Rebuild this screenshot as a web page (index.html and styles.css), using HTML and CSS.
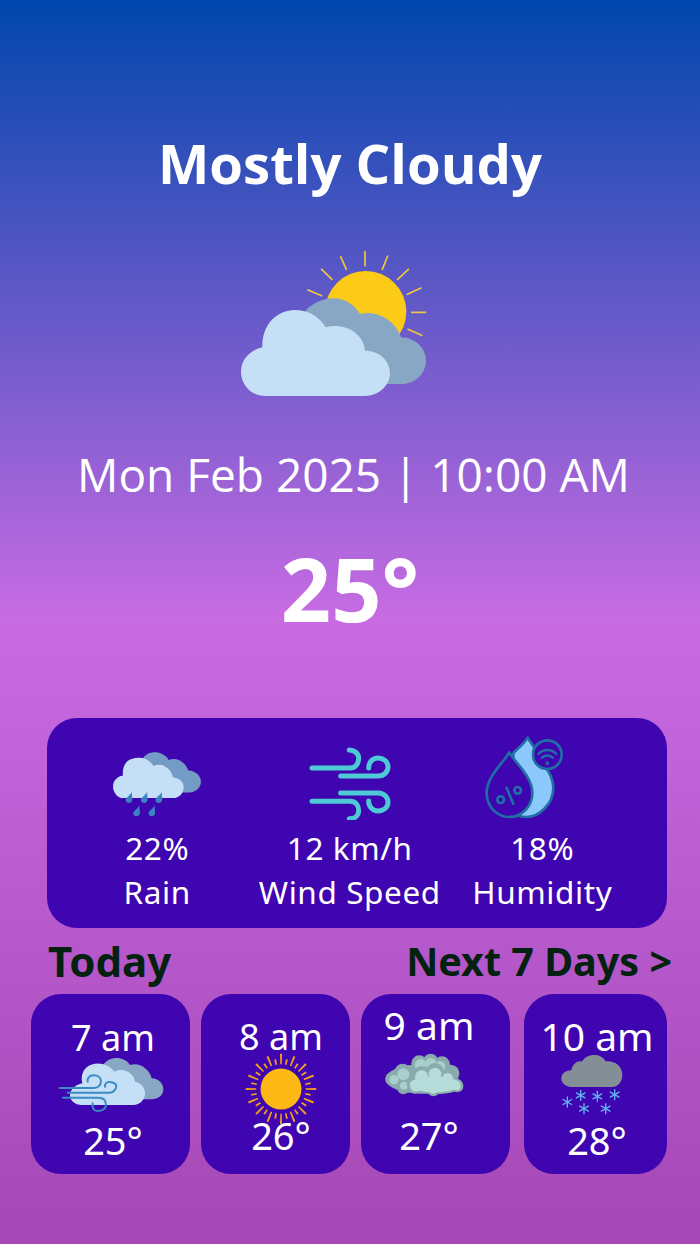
FILE: index.html
```html
<!DOCTYPE html>
<html lang="en">
<head>
  <meta charset="UTF-8" />
  <title>Weather</title>
  <link rel="stylesheet" href="styles.css">
</head>
<body>
  <svg class="defs" width="0" height="0">
    <defs>
      <path id="drop" d="M9 -17 C5 -7 -10 0 -10 8 C-10 14 -5 17 0 17 C6 17 10 12 10 6 C10 -2 8 -10 9 -17 Z" />
      <g id="flake" stroke="#62b5f0" stroke-width="4" stroke-linecap="round">
        <line x1="0" y1="-15" x2="0" y2="15" />
        <line x1="-13" y1="-7.500" x2="13" y2="7.500" />
        <line x1="-13" y1="7.500" x2="13" y2="-7.500" />
      </g>
    </defs>
  </svg>

  <main class="screen">
    <h1 class="title">Mostly Cloudy</h1>

    <svg class="hero" viewBox="0 0 690 510">
      <circle cx="437" cy="215" r="122" fill="#fccb17" />
      <g stroke="#f0c83c" stroke-width="5" stroke-linecap="round">
        <line x1="435" y1="35" x2="435" y2="77" />
        <line x1="362" y1="50" x2="379" y2="88" />
        <line x1="305" y1="88" x2="336" y2="118" />
        <line x1="264" y1="150" x2="305" y2="167" />
        <line x1="487" y1="88" x2="503" y2="48" />
        <line x1="533" y1="118" x2="565" y2="88" />
        <line x1="562" y1="163" x2="603" y2="144" />
        <line x1="575" y1="217" x2="617" y2="217" />
        <line x1="564" y1="268" x2="605" y2="286" />
      </g>
      <path fill="#88a7c4" d="M255 215 C275 190 310 175 340 175 C375 175 405 195 420 222 C470 210 525 240 543 292 C585 292 618 325 618 362 C618 400 585 432 545 432 H400 L300 300 Z" />
      <path fill="#c5dff6" d="M135 468 H435 C478 468 510 435 510 400 C510 362 478 332 435 332 C432 285 380 245 317 262 C295 225 260 210 225 210 C170 210 125 255 127 322 C90 330 63 358 63 395 C63 435 95 468 135 468 Z" />
    </svg>

    <p class="date">Mon Feb 2025 | 10:00 AM</p>
    <p class="temp">25°</p>

    <section class="stats">
      <div class="stat">
        <div class="stat-icon">
          <svg class="icon-rain" viewBox="215 105 275 205">
            <path fill="#739bc6" d="M310 130 C325 105 370 105 388 135 C415 125 440 145 447 167 C470 167 485 185 485 200 C485 218 470 233 450 233 H400 Z" />
            <path fill="#c5dff6" d="M250 250 H400 C420 250 433 235 433 218 C433 200 420 190 400 187 C398 165 370 140 342 153 C325 125 285 122 262 140 C250 152 248 170 250 182 C232 185 220 198 220 215 C220 235 235 250 250 250 Z" />
            <g fill="#3b82c0">
              <use href="#drop" x="268" y="248" />
              <use href="#drop" x="314" y="248" />
              <use href="#drop" x="358" y="248" />
              <use href="#drop" x="291" y="288" />
              <use href="#drop" x="337" y="288" />
            </g>
          </svg>
        </div>
        <div>22%</div>
        <div>Rain</div>
      </div>
      <div class="stat">
        <div class="stat-icon">
          <svg class="icon-wind" viewBox="0 15 300 225">
            <g fill="none" stroke="#4ecad6" stroke-width="15" stroke-linecap="round">
              <path d="M36 84 H150 C170 84 176 66 176 55 C176 40 162 30 148 30" />
              <path d="M122 108 H235 C252 108 264 95 264 80 C264 65 250 54 234 54 C218 54 206 66 206 84" />
              <path d="M122 159 H235 C252 159 264 172 264 187 C264 203 250 213 234 213 C218 213 206 200 206 183" />
              <path d="M36 184 H150 C170 184 176 200 176 212 C176 228 162 236 148 236" />
            </g>
          </svg>
        </div>
        <div>12 km/h</div>
        <div>Wind Speed</div>
      </div>
      <div class="stat">
        <div class="stat-icon">
          <svg class="icon-humidity" viewBox="0 0 270 270">
            <g stroke="#1f6fa5" stroke-width="8" stroke-linejoin="round">
              <path fill="#8cc8fb" d="M143 14 C155 35 170 50 180 75 C200 110 220 130 220 165 C220 215 175 252 140 252 C120 252 110 248 100 240 L100 60 C115 45 130 35 143 14 Z" />
              <path fill="#3f05b0" d="M88 58 C70 90 20 130 20 180 C20 225 55 252 88 252 C125 252 157 220 157 180 C157 130 105 90 88 58 Z" />
              <circle cx="202" cy="65" r="43" fill="#3f05b0" />
              <g fill="none">
                <circle cx="62" cy="200" r="10" />
                <circle cx="113" cy="172" r="10" />
                <path stroke-linecap="round" d="M80 165 L100 212" />
                <path stroke-linecap="round" d="M176 62 A36 36 0 0 1 228 62" />
                <path stroke-linecap="round" d="M186 74 A23 23 0 0 1 218 74" />
              </g>
              <circle cx="202" cy="91" r="2" fill="#1f6fa5" />
            </g>
          </svg>
        </div>
        <div>18%</div>
        <div>Humidity</div>
      </div>
    </section>

    <div class="section-head">
      <span class="today">Today</span>
      <span>Next 7 Days &gt;</span>
    </div>

    <section class="hours">
      <div class="hour hour-7">
        <div class="hour-label">7 am</div>
        <svg class="hour-icon" width="115" height="70" viewBox="0 0 345 210">
          <path fill="#88a7c4" d="M145 45 C160 20 205 15 225 45 C255 35 285 60 290 85 C310 85 325 100 325 118 C325 135 310 148 290 148 H200 Z" />
          <path fill="#c5dff6" d="M80 165 H235 C255 165 270 150 270 130 C270 110 255 98 240 95 C238 70 205 50 178 65 C160 40 120 32 95 52 C80 65 78 85 82 100 C60 105 45 120 45 135 C45 152 60 165 80 165 Z" />
          <g fill="none" stroke="#3b8ac4" stroke-width="6" stroke-linecap="round">
            <path d="M14 114 H118 C132 114 138 102 138 93 C138 82 128 76 115 76 C103 76 96 85 98 95" />
            <path d="M38 128 H165 C178 128 184 115 184 108 C184 100 172 96 162 96 C155 96 148 102 150 110" />
            <path d="M24 143 H130 C148 143 153 155 153 165 C153 177 140 183 128 183 C116 183 110 172 113 160" />
          </g>
        </svg>
        <div class="hour-temp">25°</div>
      </div>
      <div class="hour hour-8">
        <div class="hour-label">8 am</div>
        <svg class="hour-icon" width="72" height="72" viewBox="-36 -36 72 72">
          <g fill="none" stroke="#f5a01e">
            <circle r="30" stroke-width="10.500" pathLength="32" stroke-dasharray="0.300 1.700" stroke-dashoffset="0.150" />
            <circle r="27.500" stroke-width="5.500" pathLength="32" stroke-dasharray="0.320 1.680" stroke-dashoffset="-0.840" />
          </g>
          <circle r="20.500" fill="#fdb813" />
        </svg>
        <div class="hour-temp">26°</div>
      </div>
      <div class="hour hour-9">
        <div class="hour-label">9 am</div>
        <svg class="hour-icon" width="90" height="60" viewBox="0 0 270 180">
          <g fill="#8aabab">
            <ellipse cx="122" cy="102" rx="106" ry="44" />
            <circle cx="118" cy="55" r="24" />
            <circle cx="152" cy="48" r="22" />
            <circle cx="186" cy="58" r="24" />
            <circle cx="212" cy="85" r="26" />
            <circle cx="68" cy="80" r="24" />
            <circle cx="36" cy="102" r="20" />
            <circle cx="70" cy="130" r="18" />
          </g>
          <g fill="#a9cfcc">
            <circle cx="122" cy="60" r="18" />
            <circle cx="152" cy="55" r="16" />
            <circle cx="180" cy="64" r="16" />
            <circle cx="70" cy="88" r="18" />
            <circle cx="42" cy="104" r="14" />
            <circle cx="72" cy="122" r="12" />
          </g>
          <g fill="#8aabab">
            <ellipse cx="165" cy="118" rx="84" ry="30" />
            <circle cx="125" cy="90" r="27" />
            <circle cx="165" cy="80" r="26" />
            <circle cx="205" cy="95" r="22" />
            <circle cx="105" cy="122" r="24" />
            <circle cx="232" cy="124" r="18" />
            <circle cx="160" cy="136" r="18" />
          </g>
          <g fill="#b5dcd9">
            <ellipse cx="165" cy="118" rx="76" ry="24" />
            <circle cx="125" cy="96" r="20" />
            <circle cx="165" cy="87" r="19" />
            <circle cx="203" cy="100" r="16" />
            <circle cx="108" cy="122" r="18" />
            <circle cx="230" cy="124" r="12" />
            <circle cx="160" cy="132" r="14" />
          </g>
        </svg>
        <div class="hour-temp">27°</div>
      </div>
      <div class="hour hour-10">
        <div class="hour-label">10 am</div>
        <svg class="hour-icon" width="65" height="65" viewBox="625 200 195 195">
          <path fill="#838e96" d="M665 305 C645 305 632 292 632 280 C632 265 645 255 662 255 C665 235 680 225 695 228 C705 205 750 200 765 228 C790 225 815 240 815 268 C815 290 800 305 785 305 Z" />
          <use href="#flake" x="650" y="350" />
          <use href="#flake" x="690" y="330" />
          <use href="#flake" x="740" y="333" />
          <use href="#flake" x="792" y="328" />
          <use href="#flake" x="700" y="370" />
          <use href="#flake" x="765" y="370" />
        </svg>
        <div class="hour-temp">28°</div>
      </div>
    </section>
  </main>
</body>
</html>
```

FILE: styles.css
```css
html, body {
  margin: 0;
  padding: 0;
}
body {
  font-family: "Open Sans", sans-serif;
  color: #fff;
}
.defs {
  position: absolute;
}
.screen {
  height: 1244px;
  box-sizing: border-box;
  padding-top: 128px;
  overflow: hidden;
  background: linear-gradient(#0047ad 0, #c86be3 620px, #a547b5 1244px);
}
.title {
  margin: 0;
  font-size: 54.500px;
  line-height: 70px;
  font-weight: 700;
  text-align: center;
}
.hero {
  display: block;
  width: 230px;
  height: 170px;
  margin: 42px 0 0 220px;
}
.date {
  margin: 34px 0 0;
  padding-left: 7px;
  font-size: 46px;
  line-height: 60px;
  text-align: center;
}
.temp {
  margin: 34px 0 0;
  font-size: 88px;
  line-height: 100px;
  font-weight: 700;
  text-align: center;
}

/* stats panel */
.stats {
  display: grid;
  grid-template-columns: repeat(3, 192.500px);
  width: 620px;
  height: 210px;
  box-sizing: border-box;
  margin: 80px 0 0 47px;
  padding: 0 14px;
  background: #3f05b0;
  border-radius: 30px;
  font-family: "Noto Sans", sans-serif;
  font-size: 31.500px;
  letter-spacing: 0.600px;
  line-height: 44px;
}
.stat {
  display: flex;
  flex-direction: column;
  align-items: center;
  white-space: nowrap;
}
.stat-icon {
  height: 108px;
}
.stat-icon svg {
  display: block;
}
.icon-rain {
  width: 92px;
  height: 68px;
  margin-top: 32px;
}
.icon-wind {
  width: 100px;
  height: 75px;
  margin-top: 27px;
}
.icon-humidity {
  width: 90px;
  height: 90px;
  margin: 15px 0 0 -35px;
}

.section-head {
  display: flex;
  justify-content: space-between;
  height: 40px;
  margin-top: 13px;
  padding: 0 28px 0 48px;
  margin-bottom: 13px;
  color: #02210f;
  font-family: "Noto Sans", sans-serif;
  font-size: 39.500px;
  line-height: 40px;
  font-weight: 700;
}
.today {
  font-size: 42px;
}

/* hourly cards */
.hours {
  display: grid;
  grid-template-columns: 159px 149px 149px 146px;
  column-gap: 11px;
  padding-left: 31px;
}
.hour {
  display: flex;
  flex-direction: column;
  align-items: center;
  height: 180px;
  box-sizing: border-box;
  background: #3f05b0;
  border-radius: 30px;
  font-family: "Noto Sans", sans-serif;
  font-size: 36px;
}
.hour-label, .hour-temp {
  line-height: 40px;
  height: 40px;
}
.hour-temp {
  font-size: 38px;
}
.hour-icon {
  display: block;
  flex: none;
}
.hour-7 {
  padding: 24px 0 0 5px;
}
.hour-7 .hour-icon {
  margin: -8px 2px 0 0;
}
.hour-8 {
  padding: 23px 0 0 11px;
}
.hour-8 .hour-icon {
  margin-top: -4px;
}
.hour-8 .hour-temp {
  margin-top: -10px;
}
.hour-9 {
  padding: 11px 13px 0 0;
}
.hour-9 .hour-label, .hour-10 .hour-label {
  font-size: 39px;
}
.hour-9 .hour-icon {
  margin: 0 8px 0 0;
}
.hour-9 .hour-temp {
  margin-top: 10px;
}
.hour-10 {
  margin-left: 3px;
  padding: 22px 0 0 3px;
}
.hour-10 .hour-icon {
  margin: -4px 12px 0 0;
}
.hour-10 .hour-temp {
  margin-top: 3px;
}
```
